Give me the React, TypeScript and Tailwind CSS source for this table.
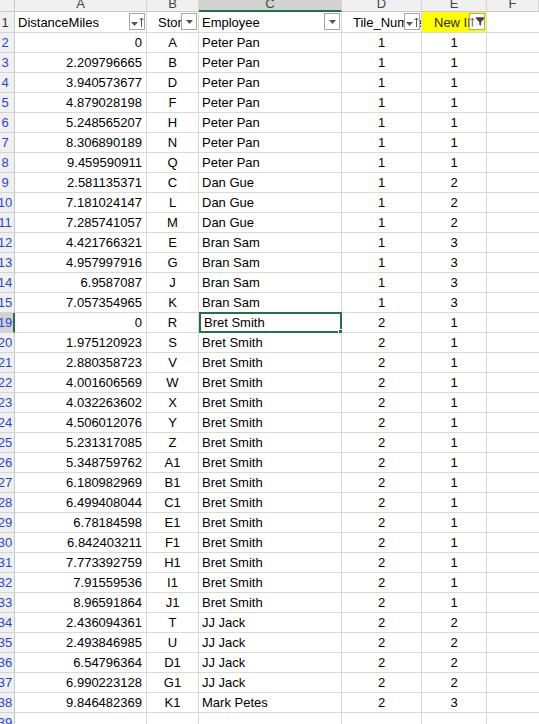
import React from "react";

type Row = [number, string, string, string, number, number];

const rows: Row[] = [
  [2, "0", "A", "Peter Pan", 1, 1],
  [3, "2.209796665", "B", "Peter Pan", 1, 1],
  [4, "3.940573677", "D", "Peter Pan", 1, 1],
  [5, "4.879028198", "F", "Peter Pan", 1, 1],
  [6, "5.248565207", "H", "Peter Pan", 1, 1],
  [7, "8.306890189", "N", "Peter Pan", 1, 1],
  [8, "9.459590911", "Q", "Peter Pan", 1, 1],
  [9, "2.581135371", "C", "Dan Gue", 1, 2],
  [10, "7.181024147", "L", "Dan Gue", 1, 2],
  [11, "7.285741057", "M", "Dan Gue", 1, 2],
  [12, "4.421766321", "E", "Bran Sam", 1, 3],
  [13, "4.957997916", "G", "Bran Sam", 1, 3],
  [14, "6.9587087", "J", "Bran Sam", 1, 3],
  [15, "7.057354965", "K", "Bran Sam", 1, 3],
  [19, "0", "R", "Bret Smith", 2, 1],
  [20, "1.975120923", "S", "Bret Smith", 2, 1],
  [21, "2.880358723", "V", "Bret Smith", 2, 1],
  [22, "4.001606569", "W", "Bret Smith", 2, 1],
  [23, "4.032263602", "X", "Bret Smith", 2, 1],
  [24, "4.506012076", "Y", "Bret Smith", 2, 1],
  [25, "5.231317085", "Z", "Bret Smith", 2, 1],
  [26, "5.348759762", "A1", "Bret Smith", 2, 1],
  [27, "6.180982969", "B1", "Bret Smith", 2, 1],
  [28, "6.499408044", "C1", "Bret Smith", 2, 1],
  [29, "6.78184598", "E1", "Bret Smith", 2, 1],
  [30, "6.842403211", "F1", "Bret Smith", 2, 1],
  [31, "7.773392759", "H1", "Bret Smith", 2, 1],
  [32, "7.91559536", "I1", "Bret Smith", 2, 1],
  [33, "8.96591864", "J1", "Bret Smith", 2, 1],
  [34, "2.436094361", "T", "JJ Jack", 2, 2],
  [35, "2.493846985", "U", "JJ Jack", 2, 2],
  [36, "6.54796364", "D1", "JJ Jack", 2, 2],
  [37, "6.990223128", "G1", "JJ Jack", 2, 2],
  [38, "9.846482369", "K1", "Mark Petes", 2, 3],
];

const grid = "grid grid-cols-[15px_132px_52px_143px_80px_65px_1fr]";

function Tri() {
  return (
    <svg width="7" height="4" viewBox="0 0 7 4">
      <path d="M0 0h7L3.5 4z" fill="#555" />
    </svg>
  );
}

function SortUp() {
  return (
    <svg width="5" height="10" viewBox="0 0 5 10">
      <path d="M2.5 1v9M0.5 3.2L2.5 1l2 2.2" stroke="#555" strokeWidth="1" fill="none" />
    </svg>
  );
}

function Funnel() {
  return (
    <svg width="9" height="9" viewBox="0 0 9 9">
      <path d="M0 0h9v1.5L5.5 5v4l-2-1V5L0 1.5z" fill="#444" />
    </svg>
  );
}

function FilterBtn({ kind }: { kind: "plain" | "sort" | "filter" }) {
  return (
    <div className="absolute right-[1px] top-[1px] w-[16px] h-[17px] border border-[#a6a6a6] bg-white flex items-center justify-center gap-[1px]">
      {kind === "plain" && <Tri />}
      {kind === "sort" && (
        <>
          <div className="mt-[4px]"><Tri /></div>
          <SortUp />
        </>
      )}
      {kind === "filter" && (
        <>
          <SortUp />
          <Funnel />
        </>
      )}
    </div>
  );
}

function Head({ text, kind, cls = "", pad = "pl-[3px]" }: { text: string; kind: "plain" | "sort" | "filter"; cls?: string; pad?: string }) {
  return (
    <div className={`relative overflow-hidden flex items-center whitespace-nowrap border-r border-b border-[#d9d9d9] ${pad} ${cls}`}>
      <span>{text}</span>
      <FilterBtn kind={kind} />
    </div>
  );
}

function RowHead({ n, color = "text-[#2446d8]", sel = false, h = "h-[20px]" }: { n: number; color?: string; sel?: boolean; h?: string }) {
  return (
    <div className={`${h} overflow-hidden border-b border-[#d4d4d4] ${sel ? "bg-[#d2d2d2] border-r-2 border-r-[#217346]" : "bg-[#f0f0f0] border-r border-r-[#c8c8c8]"} flex items-center`}>
      <div className={`w-[22px] -ml-[6px] shrink-0 text-center text-[13px] ${color}`}>{n}</div>
    </div>
  );
}

export default function App() {
  return (
    <div className="w-[539px] h-[724px] overflow-hidden bg-white text-black text-[13px] leading-none" style={{ fontFamily: '"Liberation Sans", Arial, sans-serif' }}>
      {/* column letters */}
      <div className={`${grid} h-[12px] bg-[#f0f0f0] text-[#444]`}>
        <div className="border-r border-b border-[#c8c8c8]" />
        {["A", "B", "C", "D", "E", "F"].map((c) => (
          <div
            key={c}
            className={`overflow-hidden flex justify-center border-r border-[#d4d4d4] ${c === "C" ? "bg-[#d2d2d2] border-b-2 border-b-[#217346] text-[#1d5c38]" : "border-b border-b-[#c8c8c8]"}`}
          >
            <span className="-mt-[3px] text-[13px]">{c}</span>
          </div>
        ))}
      </div>

      {/* header row */}
      <div className={`${grid} h-[21px]`}>
        <RowHead n={1} color="text-[#333]" h="h-[21px]" />
        <Head text="DistanceMiles" kind="sort" />
        <Head text="Store" kind="plain" pad="pl-[11px]" />
        <Head text="Employee" kind="plain" />
        <Head text="Tile_Number" kind="sort" pad="pl-[11px]" />
        <Head text="New ID" kind="filter" pad="pl-[12px]" cls="bg-[#ffff00] text-[#2b2b00]" />
        <div className="border-b border-[#d9d9d9]" />
      </div>

      {rows.map(([n, dist, store, emp, tile, nw]) => {
        const sel = n === 19;
        return (
          <div key={n} className={`${grid} h-[20px]`}>
            <RowHead n={n} sel={sel} />
            <div className="border-r border-b border-[#d9d9d9] flex items-center justify-end pr-[4px]">{dist}</div>
            <div className="border-r border-b border-[#d9d9d9] flex items-center justify-center">{store}</div>
            <div className={`relative flex items-center pl-[3px] ${sel ? "border-2 border-[#217346] -mt-[1px] pl-[2px]" : "border-r border-b border-[#d9d9d9]"}`}>
              {emp}
              {sel && <div className="absolute -right-[3px] -bottom-[3px] w-[5px] h-[5px] bg-[#217346] border border-white" />}
            </div>
            <div className="border-r border-b border-[#d9d9d9] flex items-center justify-center">{tile}</div>
            <div className="border-r border-b border-[#d9d9d9] flex items-center justify-center">{nw}</div>
            <div className="border-b border-[#d9d9d9]" />
          </div>
        );
      })}

      <div className={`${grid} h-[20px]`}>
        <RowHead n={39} />
        <div className="border-r border-b border-[#d9d9d9]" />
        <div className="border-r border-b border-[#d9d9d9]" />
        <div className="border-r border-b border-[#d9d9d9]" />
        <div className="border-r border-b border-[#d9d9d9]" />
        <div className="border-r border-b border-[#d9d9d9]" />
        <div className="border-b border-[#d9d9d9]" />
      </div>
    </div>
  );
}
